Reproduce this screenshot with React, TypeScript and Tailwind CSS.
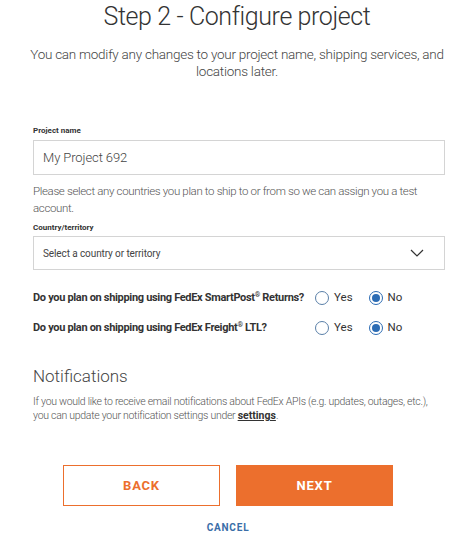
import React from "react";

const font = { fontFamily: "Roboto, 'Liberation Sans', sans-serif" };

function Radio({ checked, label }: { checked: boolean; label: string }) {
  return (
    <label className="flex items-center gap-[5px]">
      <span
        className={
          "flex h-[14px] w-[14px] items-center justify-center rounded-full border " +
          (checked ? "border-[#2c6cb4]" : "border-[#5a7fa8]")
        }
      >
        {checked && <span className="h-[8px] w-[8px] rounded-full bg-[#2c6cb4]" />}
      </span>
      <span className="text-[11.5px] text-[#333]">{label}</span>
    </label>
  );
}

function Question({ children }: { children: React.ReactNode }) {
  return (
    <div className="flex h-[16px] items-center">
      <div className="w-[282px] text-[11px] font-bold tracking-[-0.32px] whitespace-nowrap text-[#333]">{children}</div>
      <div className="flex items-center gap-[16px]">
        <Radio checked={false} label="Yes" />
        <Radio checked label="No" />
      </div>
    </div>
  );
}

export default function App() {
  return (
    <div className="h-[544px] w-[474px] bg-white" style={font}>
      <div className="pt-[2px] text-center">
        <h1 className="text-[25px] leading-[30px] font-light tracking-[-0.4px] text-[#333]">Step 2 - Configure project</h1>
        <p className="mx-auto mt-[14px] w-[440px] text-[13.5px] leading-[17px] font-light tracking-[-0.25px] text-[#444]">
          You can modify any changes to your project name, shipping services, and locations later.
        </p>
      </div>

      <div className="ml-[33px] w-[412px]">
        <div className="mt-[46px] text-[8px] leading-[10px] font-bold text-[#333]">Project name</div>
        <div className="mt-[4px] flex h-[35px] items-center border border-[#d4d4d4] px-[9px] text-[13px] font-light tracking-[-0.1px] text-[#444]">
          My Project 692
        </div>

        <p className="mt-[8px] text-[11.5px] leading-[17px] font-light tracking-[-0.35px] text-[#555]">
          Please select any countries you plan to ship to or from so we can assign you a test account.
        </p>

        <div className="mt-[6px] text-[8px] leading-[10px] font-bold text-[#333]">Country/territory</div>
        <div className="mt-[3px] flex h-[34px] items-center justify-between border border-[#d4d4d4] pr-[20px] pl-[9px]">
          <span className="text-[10px] tracking-[-0.1px] text-[#444]">Select a country or territory</span>
          <svg width="14" height="8" viewBox="0 0 14 8" fill="none">
            <path d="M1 1l6 6 6-6" stroke="#333" strokeWidth="1.2" />
          </svg>
        </div>

        <div className="mt-[20px] flex flex-col gap-[14px]">
          <Question>
            Do you plan on shipping using FedEx SmartPost<sup className="text-[7px]">®</sup> Returns?
          </Question>
          <Question>
            Do you plan on shipping using FedEx Freight<sup className="text-[7px]">®</sup> LTL?
          </Question>
        </div>

        <h2 className="mt-[29px] text-[17px] leading-[22px] font-light text-[#444]">Notifications</h2>
        <p className="mt-[8px] text-[10.5px] leading-[14px] font-light tracking-[-0.28px] text-[#555]">
          If you would like to receive email notifications about FedEx APIs (e.g. updates, outages, etc.), you can update your
          notification settings under <span className="font-bold tracking-normal text-[#333] underline">settings</span>.
        </p>
      </div>

      <div className="mt-[42px] ml-[63px] flex gap-[16px]">
        <button className="flex h-[41px] w-[157px] items-center justify-center border border-[#ec6f2d] text-[13px] font-bold tracking-[0.8px] text-[#ec6f2d]">
          BACK
        </button>
        <button className="flex h-[41px] w-[157px] items-center justify-center bg-[#ec6f2d] text-[13px] font-bold tracking-[0.8px] text-white">
          NEXT
        </button>
      </div>
      <div className="mt-[14px] ml-[63px] w-[330px] text-center text-[10px] font-bold tracking-[0.8px] text-[#3a6ea8]">
        CANCEL
      </div>
    </div>
  );
}
